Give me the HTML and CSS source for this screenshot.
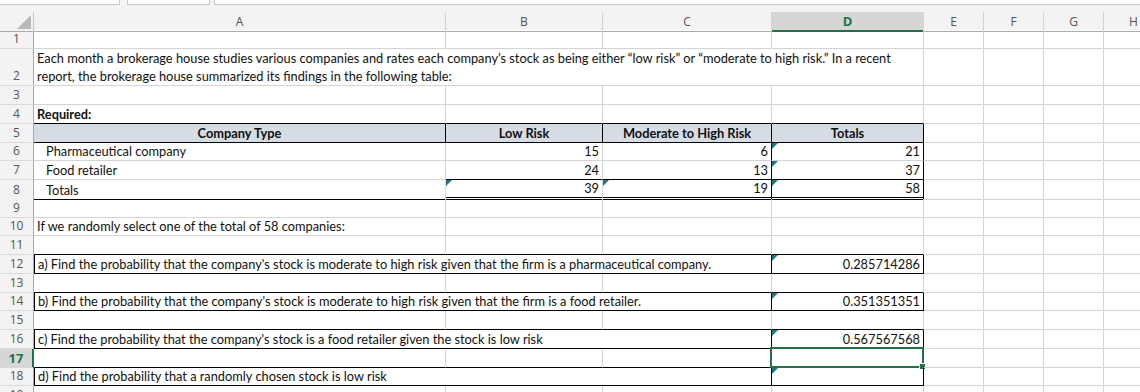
FILE: index.html
```html
<!DOCTYPE html>
<html lang="en">
<head>
    <meta charset="UTF-8">
    <meta name="viewport" content="width=device-width, initial-scale=1.0">
    <title>Brokerage risk table</title>
    <link rel="stylesheet" href="styles.css">
</head>
<body>
    <div class="toolbar">
        <div class="tool-box name-box"></div>
        <div class="tool-box fx-box"></div>
        <div class="tool-box formula-box"></div>
    </div>

    <div class="sheet">
        <div class="row col-heads">
            <div class="corner"><span class="corner-mark"></span></div>
            <div class="ch">A</div>
            <div class="ch">B</div>
            <div class="ch">C</div>
            <div class="ch active">D</div>
            <div class="ch">E</div>
            <div class="ch">F</div>
            <div class="ch">G</div>
            <div class="ch">H</div>
        </div>

        <div class="row">
            <div class="rh">1</div>
            <div class="cell"></div><div class="cell"></div><div class="cell"></div><div class="cell"></div>
            <div class="cell"></div><div class="cell"></div><div class="cell"></div><div class="cell"></div>
        </div>

        <div class="row tall">
            <div class="rh">2</div>
            <div class="cell span4 wrap">Each month a brokerage house studies various companies and rates each company’s stock as being either “low risk” or “moderate to high risk.” In a recent<br>report, the brokerage house summarized its findings in the following table:</div>
            <div class="cell"></div><div class="cell"></div><div class="cell"></div><div class="cell"></div>
        </div>

        <div class="row">
            <div class="rh">3</div>
            <div class="cell"></div><div class="cell"></div><div class="cell"></div><div class="cell"></div>
            <div class="cell"></div><div class="cell"></div><div class="cell"></div><div class="cell"></div>
        </div>

        <div class="row">
            <div class="rh">4</div>
            <div class="cell bb bold">Required:</div><div class="cell bb"></div><div class="cell bb"></div><div class="cell bb"></div>
            <div class="cell"></div><div class="cell"></div><div class="cell"></div><div class="cell"></div>
        </div>

        <div class="row">
            <div class="rh">5</div>
            <div class="cell th bb br">Company Type</div>
            <div class="cell th bb br">Low Risk</div>
            <div class="cell th bb br">Moderate to High Risk</div>
            <div class="cell th bb br">Totals</div>
            <div class="cell"></div><div class="cell"></div><div class="cell"></div><div class="cell"></div>
        </div>

        <div class="row short">
            <div class="rh">6</div>
            <div class="cell indent">Pharmaceutical company</div>
            <div class="cell num">15</div>
            <div class="cell num br">6</div>
            <div class="cell num br flag">21</div>
            <div class="cell"></div><div class="cell"></div><div class="cell"></div><div class="cell"></div>
        </div>

        <div class="row">
            <div class="rh">7</div>
            <div class="cell indent">Food retailer</div>
            <div class="cell num bb">24</div>
            <div class="cell num bb br">13</div>
            <div class="cell num bb br flag">37</div>
            <div class="cell"></div><div class="cell"></div><div class="cell"></div><div class="cell"></div>
        </div>

        <div class="row">
            <div class="rh">8</div>
            <div class="cell indent bb">Totals</div>
            <div class="cell num dbl flag">39</div>
            <div class="cell num dbl br flag">19</div>
            <div class="cell num dbl br flag">58</div>
            <div class="cell"></div><div class="cell"></div><div class="cell"></div><div class="cell"></div>
        </div>

        <div class="row">
            <div class="rh">9</div>
            <div class="cell"></div><div class="cell"></div><div class="cell"></div><div class="cell"></div>
            <div class="cell"></div><div class="cell"></div><div class="cell"></div><div class="cell"></div>
        </div>

        <div class="row short">
            <div class="rh">10</div>
            <div class="cell">If we randomly select one of the total of 58 companies:</div>
            <div class="cell"></div><div class="cell"></div><div class="cell"></div>
            <div class="cell"></div><div class="cell"></div><div class="cell"></div><div class="cell"></div>
        </div>

        <div class="row">
            <div class="rh">11</div>
            <div class="cell bb"></div><div class="cell bb"></div><div class="cell bb"></div><div class="cell bb"></div>
            <div class="cell"></div><div class="cell"></div><div class="cell"></div><div class="cell"></div>
        </div>

        <div class="row">
            <div class="rh">12</div>
            <div class="cell span3 bl bb br">a) Find the probability that the company's stock is moderate to high risk given that the firm is a pharmaceutical company.</div>
            <div class="cell num bb br flag">0.285714286</div>
            <div class="cell"></div><div class="cell"></div><div class="cell"></div><div class="cell"></div>
        </div>

        <div class="row">
            <div class="rh">13</div>
            <div class="cell bb"></div><div class="cell bb"></div><div class="cell bb"></div><div class="cell bb"></div>
            <div class="cell"></div><div class="cell"></div><div class="cell"></div><div class="cell"></div>
        </div>

        <div class="row short">
            <div class="rh">14</div>
            <div class="cell span3 bl bb br">b) Find the probability that the company's stock is moderate to high risk given that the firm is a food retailer.</div>
            <div class="cell num bb br flag">0.351351351</div>
            <div class="cell"></div><div class="cell"></div><div class="cell"></div><div class="cell"></div>
        </div>

        <div class="row">
            <div class="rh">15</div>
            <div class="cell bb"></div><div class="cell bb"></div><div class="cell bb"></div><div class="cell bb"></div>
            <div class="cell"></div><div class="cell"></div><div class="cell"></div><div class="cell"></div>
        </div>

        <div class="row">
            <div class="rh">16</div>
            <div class="cell span3 bl bb br">c) Find the probability that the company's stock is a food retailer given the stock is low risk</div>
            <div class="cell num bb br flag">0.567567568</div>
            <div class="cell"></div><div class="cell"></div><div class="cell"></div><div class="cell"></div>
        </div>

        <div class="row">
            <div class="rh active">17</div>
            <div class="cell bb"></div><div class="cell bb"></div><div class="cell bb br"></div>
            <div class="cell bb br selected"><span class="selection"><span class="fill-handle"></span></span></div>
            <div class="cell"></div><div class="cell"></div><div class="cell"></div><div class="cell"></div>
        </div>

        <div class="row short">
            <div class="rh">18</div>
            <div class="cell span3 bl bb br">d) Find the probability that a randomly chosen stock is low risk</div>
            <div class="cell num bb br flag"></div>
            <div class="cell"></div><div class="cell"></div><div class="cell"></div><div class="cell"></div>
        </div>

        <div class="row">
            <div class="rh">19</div>
            <div class="cell"></div><div class="cell"></div><div class="cell"></div><div class="cell"></div>
            <div class="cell"></div><div class="cell"></div><div class="cell"></div><div class="cell"></div>
        </div>
    </div>
</body>
</html>
```

FILE: styles.css
```css
body {
    margin: 0;
    background-color: #f3f3f3;
    overflow: hidden;
    font-family: Lato, "Open Sans", sans-serif;
}
.toolbar {
    display: flex;
    gap: 4px;
    height: 5px;
    margin-bottom: 7px;
    align-items: flex-end;
}
.tool-box {
    height: 5px;
    background-color: white;
    border: 1px solid #c8c8c8;
    border-top: none;
    box-sizing: border-box;
}
.name-box {
    width: 120px;
    border-left: none;
}
.fx-box {
    width: 83px;
    margin-left: 3px;
}
.formula-box {
    flex: 1;
    border-right: none;
}
.sheet {
    background-color: white;
}
.row {
    display: grid;
    grid-template-columns: 34px 412px 157px 169px 152px 60px 60px 60px 60px;
    height: 19px;
}
.row.short {
    height: 18px;
}
.row.tall {
    height: 37px;
}
.col-heads {
    height: 18px;
    background-color: #f3f3f3;
}
.corner {
    position: relative;
    border-right: 1px solid #c6c6c6;
    border-bottom: 1px solid #ababab;
    box-sizing: border-box;
}
.corner-mark {
    position: absolute;
    right: 2px;
    bottom: 2px;
    width: 0;
    height: 0;
    border-left: 14px solid transparent;
    border-bottom: 14px solid #b8b8b8;
}
.ch {
    display: flex;
    align-items: center;
    justify-content: center;
    border-right: 1px solid #d4d4d4;
    border-bottom: 1px solid #ababab;
    box-sizing: border-box;
    font-family: "Open Sans", sans-serif;
    font-size: 12px;
    color: #555;
}
.ch.active {
    background-color: #d6d6d6;
    border-bottom: 2px solid #217346;
    color: #217346;
    font-weight: bold;
    font-size: 13px;
}
.rh {
    display: flex;
    align-items: flex-end;
    justify-content: center;
    padding-bottom: 1px;
    background-color: #f3f3f3;
    border-right: 1px solid #ababab;
    border-bottom: 1px solid #dadada;
    box-sizing: border-box;
    font-family: "Open Sans", sans-serif;
    font-size: 12px;
    line-height: 16px;
    color: #555;
}
.rh.active {
    background-color: #d6d6d6;
    border-right: 2px solid #217346;
    color: #217346;
    font-weight: bold;
    font-size: 13px;
}
.cell {
    position: relative;
    display: flex;
    align-items: flex-end;
    padding: 0 3px;
    border-right: 1px solid #d4d4d4;
    border-bottom: 1px solid #d4d4d4;
    box-sizing: border-box;
    font-size: 12.8px;
    line-height: 17px;
    color: #111;
    white-space: nowrap;
}
.span3 {
    grid-column: span 3;
}
.span4 {
    grid-column: span 4;
}
.wrap {
    line-height: 18px;
}
.bold {
    font-weight: bold;
}
.indent {
    padding-left: 12px;
}
.num {
    justify-content: flex-end;
}
.th {
    justify-content: center;
    font-weight: bold;
    background-color: #d6dce4;
}
.bb {
    border-bottom-color: #000;
}
.br {
    border-right-color: #000;
}
.bl {
    border-left: 1px solid #000;
}
.dbl {
    border-bottom: 3px double #000;
}
.flag::before {
    content: "";
    position: absolute;
    top: 0;
    left: 0;
    width: 0;
    height: 0;
    border-top: 6px solid #1b7b84;
    border-right: 6px solid transparent;
}
.selection {
    position: absolute;
    left: -2px;
    top: -2px;
    width: 154px;
    height: 21px;
    border: 2px solid #217346;
    box-sizing: border-box;
}
.fill-handle {
    position: absolute;
    right: -4px;
    bottom: -4px;
    width: 5px;
    height: 5px;
    background-color: #217346;
    border: 1px solid white;
}
```
